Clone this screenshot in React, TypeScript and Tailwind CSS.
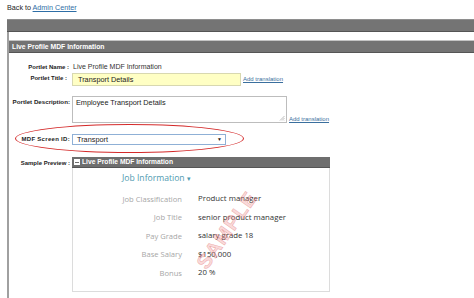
export default function App() {
  const rows = [
    { label: 'Job Classification', value: 'Product manager' },
    { label: 'Job Title', value: 'senior product manager' },
    { label: 'Pay Grade', value: 'salary grade 18' },
    { label: 'Base Salary', value: '$150,000' },
    { label: 'Bonus', value: '20 %' },
  ];

  return (
    <div className="w-[474px] h-[298px] overflow-hidden bg-white font-['Liberation_Sans',Arial,sans-serif] text-[#222]">
      <div className="h-[15px] pl-[7px] pt-[3px] text-[7.2px] leading-[9px]">
        Back to <span className="text-[#2e6ea6] underline">Admin Center</span>
      </div>

      <div className="mt-[4px] ml-[7px] h-[13px] bg-[#747474] border-t border-t-[#8e8e8e] border-b border-b-[#555]" />

      <div className="ml-[7px] border-l-2 border-[#a0a0a0] h-[300px]">
        <div className="h-[8px]" />
        <div className="h-[13px] bg-[#737373] border-t border-t-[#c4c4c4] border-b border-b-[#555] pl-[3px] text-[6.8px] leading-[11px] font-bold text-white">
          Live Profile MDF Information
        </div>

        {/* Portlet Name */}
        <div className="mt-[9px] flex items-center h-[10px]">
          <div className="w-[61px] shrink-0 text-right text-[6px] font-bold pr-[1px]">Portlet Name :</div>
          <div className="ml-[3px] text-[7px] text-[#333]">Live Profile MDF Information</div>
        </div>

        {/* Portlet Title */}
        <div className="mt-[1px] flex items-center h-[13px]">
          <div className="w-[61px] shrink-0 text-right text-[6px] font-bold pr-[3px] self-start pt-[1px]">Portlet Title :</div>
          <div className="ml-[2px] w-[169px] h-[13px] bg-[#ffffc4] border border-[#d8d8b0] pl-[5px] text-[7.3px] leading-[11px] text-[#222]">
            Transport Details
          </div>
          <div className="ml-[2px] text-[6px] text-[#3a6f9e] underline">Add translation</div>
        </div>

        {/* Portlet Description */}
        <div className="mt-[10px] flex items-start h-[27px]">
          <div className="w-[61px] shrink-0 text-right text-[6.2px] font-bold pt-[1px]">Portlet Description:</div>
          <div className="relative ml-[2px] w-[215px] h-[27px] bg-white border border-[#bdbdbd] pl-[3px] pt-[1px] text-[7.3px] leading-[9px] text-[#222]">
            Employee Transport Details
            <svg className="absolute right-[1px] bottom-[1px]" width="6" height="6" viewBox="0 0 6 6">
              <path d="M5.5 1 L1 5.5 M5.5 3 L3 5.5 M5.5 5 L5 5.5" stroke="#a0a0a0" strokeWidth="0.7" />
            </svg>
          </div>
          <div className="ml-[2px] self-end text-[6px] leading-[8px] text-[#3a6f9e] underline">Add translation</div>
        </div>

        {/* MDF Screen ID */}
        <div className="relative mt-[11px] flex items-center h-[11px]">
          <div className="absolute left-[6px] top-[-10px] w-[229px] h-[29px] rounded-[50%] border border-[#d42a2a]" />
          <div className="w-[61px] shrink-0 text-right text-[6px] font-bold tracking-[0.3px]">MDF Screen ID:</div>
          <div className="ml-[2px] w-[154px] h-[11px] bg-white border border-[#8fb0d6] flex items-center justify-between pl-[4px] pr-[3px] text-[7.3px] leading-[9px] text-[#222]">
            <span>Transport</span>
            <span className="text-[5px] text-[#222]">▼</span>
          </div>
        </div>

        {/* Sample Preview */}
        <div className="mt-[12px] flex items-start">
          <div className="w-[61px] shrink-0 text-right text-[6px] font-bold pt-[2px]">Sample Preview :</div>
          <div className="ml-[2px] w-[258px] relative">
            <div className="h-[11px] bg-[#6e6e6e] border-b border-[#555] flex items-center pl-[2px] gap-[2px] text-[6.7px] font-bold text-white">
              <span className="w-[6px] h-[6px] bg-white flex items-center justify-center">
                <span className="w-[4px] h-[1px] bg-[#6e6e6e]" />
              </span>
              <span>Live Profile MDF Information</span>
            </div>
            <div className="h-[124px] border-l border-r border-b border-[#dcdcdc] font-['Open_Sans',sans-serif]">
              <div className="pt-[4px] pl-[49px] text-[8.6px] leading-[12px] text-[#4f9ab0]">
                Job Information <span className="text-[7px]">▾</span>
              </div>
              <div className="mt-[5px]">
                {rows.map((r) => (
                  <div key={r.label} className="flex items-center h-[18.5px]">
                    <div className="w-[109px] text-right text-[7.6px] text-[#a6a6a6]">{r.label}</div>
                    <div className="ml-[16px] text-[7.8px] text-[#333]">{r.value}</div>
                  </div>
                ))}
              </div>
            </div>
            <div className="absolute left-[110px] top-[58px] -rotate-[55deg] text-[20px] font-bold tracking-[1px] text-[rgba(240,150,150,0.35)] [-webkit-text-stroke:0.5px_rgba(220,90,90,0.5)] font-['Liberation_Sans',sans-serif]">
              SAMPLE
            </div>
          </div>
        </div>
      </div>
    </div>
  );
}
